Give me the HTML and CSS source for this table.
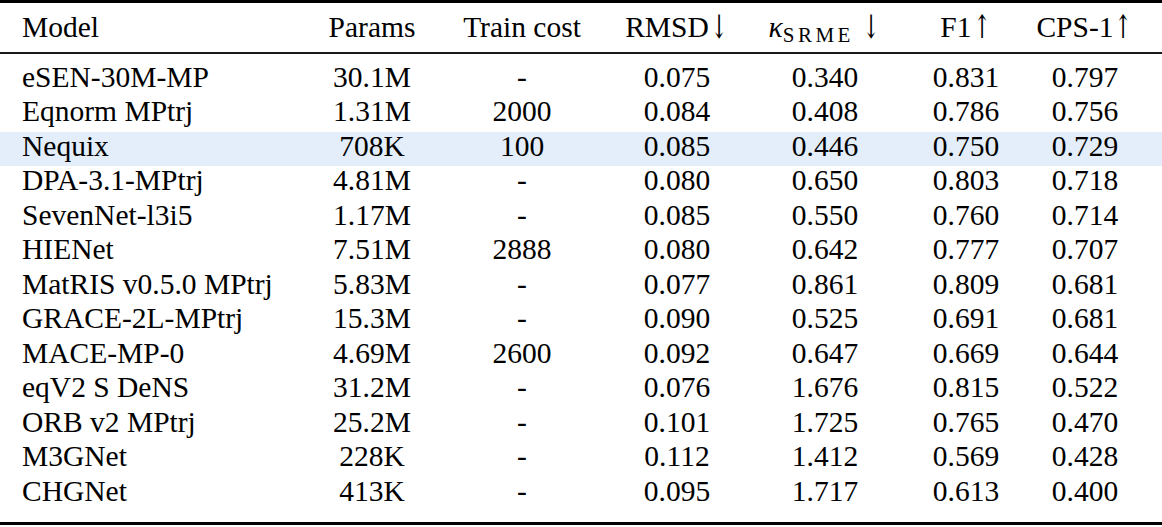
FILE: index.html
```html
<!DOCTYPE html>
<html>
<head>
<meta charset="utf-8">
<link rel="stylesheet" href="styles.css">
</head>
<body>
<table class="results">
  <colgroup>
    <col class="c-model"><col class="c-params"><col class="c-cost"><col class="c-rmsd"><col class="c-kappa"><col class="c-f1"><col class="c-cps">
  </colgroup>
  <thead>
    <tr>
      <th class="left">Model</th>
      <th>Params</th>
      <th>Train cost</th>
      <th>RMSD<span class="arr">↓</span></th>
      <th><i class="kappa">κ</i><span class="sub">SRME</span> <span class="arr">↓</span></th>
      <th>F1<span class="arr">↑</span></th>
      <th class="last">CPS-1<span class="arr">↑</span></th>
    </tr>
  </thead>
  <tbody>
    <tr><td class="left">eSEN-30M-MP</td><td>30.1M</td><td>-</td><td>0.075</td><td>0.340</td><td>0.831</td><td class="last">0.797</td></tr>
    <tr><td class="left">Eqnorm MPtrj</td><td>1.31M</td><td>2000</td><td>0.084</td><td>0.408</td><td>0.786</td><td class="last">0.756</td></tr>
    <tr class="hl"><td class="left">Nequix</td><td>708K</td><td>100</td><td>0.085</td><td>0.446</td><td>0.750</td><td class="last">0.729</td></tr>
    <tr class="after-hl"><td class="left">DPA-3.1-MPtrj</td><td>4.81M</td><td>-</td><td>0.080</td><td>0.650</td><td>0.803</td><td class="last">0.718</td></tr>
    <tr><td class="left">SevenNet-l3i5</td><td>1.17M</td><td>-</td><td>0.085</td><td>0.550</td><td>0.760</td><td class="last">0.714</td></tr>
    <tr><td class="left">HIENet</td><td>7.51M</td><td>2888</td><td>0.080</td><td>0.642</td><td>0.777</td><td class="last">0.707</td></tr>
    <tr><td class="left">MatRIS v0.5.0 MPtrj</td><td>5.83M</td><td>-</td><td>0.077</td><td>0.861</td><td>0.809</td><td class="last">0.681</td></tr>
    <tr><td class="left">GRACE-2L-MPtrj</td><td>15.3M</td><td>-</td><td>0.090</td><td>0.525</td><td>0.691</td><td class="last">0.681</td></tr>
    <tr><td class="left">MACE-MP-0</td><td>4.69M</td><td>2600</td><td>0.092</td><td>0.647</td><td>0.669</td><td class="last">0.644</td></tr>
    <tr><td class="left">eqV2 S DeNS</td><td>31.2M</td><td>-</td><td>0.076</td><td>1.676</td><td>0.815</td><td class="last">0.522</td></tr>
    <tr><td class="left">ORB v2 MPtrj</td><td>25.2M</td><td>-</td><td>0.101</td><td>1.725</td><td>0.765</td><td class="last">0.470</td></tr>
    <tr><td class="left">M3GNet</td><td>228K</td><td>-</td><td>0.112</td><td>1.412</td><td>0.569</td><td class="last">0.428</td></tr>
    <tr><td class="left">CHGNet</td><td>413K</td><td>-</td><td>0.095</td><td>1.717</td><td>0.613</td><td class="last">0.400</td></tr>
  </tbody>
</table>
</body>
</html>
```
FILE: styles.css
```css
html, body {
  margin: 0;
  padding: 0;
  background: #ffffff;
}

.results {
  width: 1162px;
  table-layout: fixed;
  border-collapse: separate;
  border-spacing: 0;
  font-family: "Liberation Serif", Tinos, "Times New Roman", Times, serif;
  font-size: 29.5px;
  line-height: 34.5px;
  color: #000;
}

.c-model { width: 305px; }
.c-params { width: 134px; }
.c-cost { width: 166px; }
.c-rmsd { width: 144px; }
.c-kappa { width: 152px; }
.c-f1 { width: 130px; }
.c-cps { width: 131px; }

.results th,
.results td {
  padding: 0;
  text-align: center;
  white-space: nowrap;
  font-weight: normal;
}

.results .left {
  text-align: left;
  padding-left: 22px;
}

.results .last {
  padding-right: 23px;
}

.results thead th {
  border-top: 3px solid #000;
  border-bottom: 2px solid #1a1a1a;
  padding-top: 7px;
  padding-bottom: 7px;
}

.results tbody tr:first-child td {
  padding-top: 6px;
}

.results tbody tr:last-child td {
  padding-bottom: 14px;
  border-bottom: 3px solid #000;
}

.results tr.hl td {
  background: linear-gradient(to bottom, transparent 3px, #e3eefa 3px);
}

.results tr.after-hl td {
  background: linear-gradient(to bottom, #e3eefa 3px, transparent 3px);
}

.arr {
  display: inline-block;
  font-family: "DejaVu Serif", "Liberation Serif", serif;
  font-size: 24px;
  line-height: 20px;
  transform: scale(0.85, 1.35);
  transform-origin: 50% 70%;
}

.kappa {
  font-style: italic;
  font-family: "Liberation Serif", serif;
}

.sub {
  font-size: 21px;
  letter-spacing: 3.5px;
  line-height: 0;
  vertical-align: -5px;
}
```
